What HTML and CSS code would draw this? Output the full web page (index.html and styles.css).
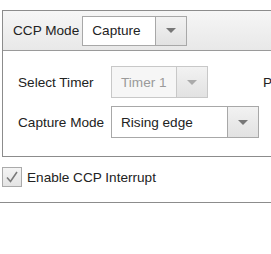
FILE: index.html
```html
<!DOCTYPE html>
<html lang="en">
<head>
  <meta charset="UTF-8">
  <title>CCP Settings</title>
  <link rel="stylesheet" href="styles.css">
</head>
<body>
  <div class="panel">
    <div class="panel-head">
      <span class="label">CCP Mode</span>
      <div class="select">
        <div class="field mode-field">Capture</div>
        <div class="btn"><span class="caret"></span></div>
      </div>
    </div>
    <div class="panel-body">
      <span class="label">Select Timer</span>
      <div class="select disabled">
        <div class="field timer-field">Timer 1</div>
        <div class="btn"><span class="caret"></span></div>
      </div>
      <span class="label">Prescaler</span>
      <span class="label">Capture Mode</span>
      <div class="select">
        <div class="field edge-field">Rising edge</div>
        <div class="btn"><span class="caret"></span></div>
      </div>
    </div>
  </div>
  <div class="check-row">
    <span class="checkbox">
      <svg width="14" height="14" viewBox="0 0 14 14"><path d="M2 7.5 L5.5 11.5 L12 2" fill="none" stroke="#7a7a7a" stroke-width="1.6"/></svg>
    </span>
    <span class="label">Enable CCP Interrupt</span>
  </div>
  <div class="rule"></div>
</body>
</html>
```

FILE: styles.css
```css
body {
  margin: 0;
  font-family: "Liberation Sans", Arial, sans-serif;
  font-size: 13.6px;
  color: #222;
  background: #fff;
  overflow: hidden;
}
.panel {
  margin: 10px 0 0 2px;
  width: 400px;
  border: 1px solid #8c8c8c;
  border-right: none;
}
.panel-head {
  display: flex;
  align-items: center;
  gap: 3px;
  height: 39px;
  padding-left: 10px;
  background: linear-gradient(#f6f6f6, #e8e8e8);
  border-bottom: 1px solid #9a9a9a;
}
.select {
  display: flex;
  height: 30px;
  border: 1px solid #a8a8a8;
  box-sizing: border-box;
}
.field {
  display: flex;
  align-items: center;
  padding-left: 9px;
  background: #fff;
  box-sizing: border-box;
}
.mode-field { width: 72px; }
.timer-field { width: 64px; }
.edge-field { width: 115px; }
.btn {
  width: 30px;
  display: flex;
  align-items: center;
  justify-content: center;
  background: linear-gradient(#f2f2f2, #e2e2e2);
  border-left: 1px solid #a8a8a8;
}
.caret {
  width: 0;
  height: 0;
  border-left: 5px solid transparent;
  border-right: 5px solid transparent;
  border-top: 5px solid #777;
}
.disabled {
  border-color: #c8c8c8;
}
.disabled .field {
  background: #f6f6f6;
  color: #9a9a9a;
}
.disabled .btn {
  border-left-color: #c8c8c8;
}
.disabled .caret {
  border-top-color: #aaa;
}
.panel-body {
  display: grid;
  grid-template-columns: 89px max-content 1fr;
  column-gap: 4px;
  row-gap: 8px;
  align-items: center;
  padding: 15px 0 18px 15px;
}
.panel-body .select {
  height: 32px;
  justify-self: start;
}
.check-row {
  display: flex;
  align-items: center;
  gap: 5px;
  margin: 10px 0 0 2px;
  height: 20px;
}
.checkbox {
  width: 20px;
  height: 20px;
  box-sizing: border-box;
  border: 1px solid #aaa;
  background: linear-gradient(#f4f4f4, #e4e4e4);
  display: flex;
  align-items: center;
  justify-content: center;
}
.rule {
  margin-top: 15px;
  border-top: 1px solid #8c8c8c;
}
```
